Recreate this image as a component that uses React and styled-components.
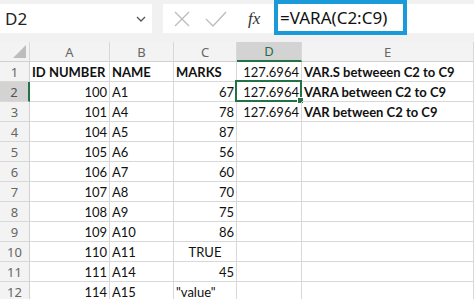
import React from "react";
import styled, { createGlobalStyle } from "styled-components";

const GlobalStyle = createGlobalStyle`
  html, body {
    margin: 0;
    padding: 0;
    background: #ffffff;
  }
  body {
    width: 474px;
    height: 299px;
    overflow: hidden;
    font-family: "Lato", "Noto Sans", sans-serif;
  }
`;

const columns = ["A", "B", "C", "D", "E"];

const rows = [
  { n: 1, a: "ID NUMBER", b: "NAME", c: "MARKS", d: "127.6964", e: "VAR.S betweeen C2 to C9", bold: true },
  { n: 2, a: "100", b: "A1", c: "67", d: "127.6964", e: "VARA between C2 to C9" },
  { n: 3, a: "101", b: "A4", c: "78", d: "127.6964", e: "VAR between C2 to C9" },
  { n: 4, a: "104", b: "A5", c: "87" },
  { n: 5, a: "105", b: "A6", c: "56" },
  { n: 6, a: "106", b: "A7", c: "60" },
  { n: 7, a: "107", b: "A8", c: "70" },
  { n: 8, a: "108", b: "A9", c: "75" },
  { n: 9, a: "109", b: "A10", c: "86" },
  { n: 10, a: "110", b: "A11", c: "TRUE", cAlign: "center" },
  { n: 11, a: "111", b: "A14", c: "45" },
  { n: 12, a: "114", b: "A15", c: "\"value\"", cAlign: "left" },
];

const Page = styled.div`
  position: relative;
  width: 474px;
  height: 299px;
  overflow: hidden;
`;

const TopBar = styled.div`
  display: flex;
  align-items: center;
  height: 42px;
  padding: 4px 0 9px 0;
  box-sizing: border-box;
  background: #f1f1f1;
  gap: 11px;
`;

const NameBox = styled.div`
  width: 152px;
  height: 29px;
  background: #ffffff;
  display: flex;
  align-items: center;
  justify-content: space-between;
  padding: 0 6px 0 5px;
  box-sizing: border-box;
  font-family: "Noto Sans", sans-serif;
  font-size: 17px;
  color: #222;
`;

const FormulaArea = styled.div`
  flex: 1;
  height: 29px;
  background: #ffffff;
  display: flex;
  align-items: center;
  padding-left: 10px;
  gap: 14px;
`;

const FxLabel = styled.span`
  font-family: "Liberation Serif", serif;
  font-style: italic;
  font-size: 17px;
  color: #333;
  margin-left: 7px;
`;

const FormulaBox = styled.div`
  position: absolute;
  left: 274px;
  top: 0px;
  width: 133px;
  height: 35px;
  border: 4px solid #1a9ad8;
  box-sizing: border-box;
  background: #ffffff;
  display: flex;
  align-items: center;
  padding-left: 2px;
  font-family: "Noto Sans", sans-serif;
  font-size: 17px;
  color: #111;
`;

const Grid = styled.div`
  display: grid;
  grid-template-columns: 30px 80px 64px 63px 65px 1fr;
  grid-auto-rows: 20px;
  font-size: 13px;
`;

const Corner = styled.div`
  background: #f3f3f3;
  border-right: 1px solid #d8d8d8;
  border-bottom: 1px solid #d0d0d0;
  position: relative;
  &::after {
    content: "";
    position: absolute;
    right: 3px;
    bottom: 3px;
    border-left: 13px solid transparent;
    border-bottom: 13px solid #bdbdbd;
  }
`;

const ColHead = styled.div`
  background: ${(p) => (p.$active ? "#d3d3d3" : "#f3f3f3")};
  color: ${(p) => (p.$active ? "#1e6f45" : "#666")};
  border-right: 1px solid #d8d8d8;
  border-bottom: ${(p) => (p.$active ? "2px solid #217346" : "1px solid #d0d0d0")};
  box-sizing: border-box;
  display: flex;
  align-items: center;
  justify-content: center;
  font-family: "Noto Sans", sans-serif;
  font-size: 13px;
`;

const RowHead = styled.div`
  background: ${(p) => (p.$active ? "#d3d3d3" : "#f3f3f3")};
  color: ${(p) => (p.$active ? "#555" : "#666")};
  border-right: ${(p) => (p.$active ? "2px solid #217346" : "1px solid #d0d0d0")};
  border-bottom: 1px solid #d8d8d8;
  box-sizing: border-box;
  display: flex;
  align-items: center;
  justify-content: center;
  font-family: "Noto Sans", sans-serif;
  font-size: 13px;
`;

const Cell = styled.div`
  position: relative;
  border-right: 1px solid #d8d8d8;
  border-bottom: 1px solid #d8d8d8;
  box-sizing: border-box;
  display: flex;
  align-items: center;
  justify-content: ${(p) =>
    p.$align === "right" ? "flex-end" : p.$align === "center" ? "center" : "flex-start"};
  padding: 1px 2px 0 2px;
  white-space: nowrap;
  overflow: visible;
  color: #111;
  font-weight: ${(p) => (p.$bold ? 700 : 400)};
`;

const Selection = styled.div`
  position: absolute;
  left: -2px;
  top: -2px;
  right: -1px;
  bottom: -1px;
  border: 2px solid #217346;
  pointer-events: none;
  &::after {
    content: "";
    position: absolute;
    right: -4px;
    bottom: -4px;
    width: 5px;
    height: 5px;
    background: #217346;
    border: 1px solid #fff;
  }
`;

const Chevron = () => (
  <svg width="10" height="6" viewBox="0 0 10 6">
    <path d="M1 1 L5 5 L9 1" fill="none" stroke="#555" strokeWidth="1.3" />
  </svg>
);

const CrossIcon = () => (
  <svg width="18" height="18" viewBox="0 0 18 18">
    <path d="M2 2 L16 16 M16 2 L2 16" stroke="#bdbdbd" strokeWidth="1.4" />
  </svg>
);

const CheckIcon = () => (
  <svg width="22" height="18" viewBox="0 0 22 18">
    <path d="M1 9 L8 16 L21 2" fill="none" stroke="#bdbdbd" strokeWidth="1.4" />
  </svg>
);

export default function App() {
  return (
    <Page>
      <GlobalStyle />
      <TopBar>
        <NameBox>
          <span>D2</span>
          <Chevron />
        </NameBox>
        <FormulaArea>
          <CrossIcon />
          <CheckIcon />
          <FxLabel>fx</FxLabel>
        </FormulaArea>
      </TopBar>
      <FormulaBox>=VARA(C2:C9)</FormulaBox>
      <Grid>
        <Corner />
        {columns.map((c) => (
          <ColHead key={c} $active={c === "D"}>
            {c}
          </ColHead>
        ))}
        {rows.map((r) => (
          <React.Fragment key={r.n}>
            <RowHead $active={r.n === 2}>{r.n}</RowHead>
            <Cell $align={r.bold ? "left" : "right"} $bold={r.bold}>
              {r.a}
            </Cell>
            <Cell $bold={r.bold}>{r.b}</Cell>
            <Cell $align={r.bold ? "left" : r.cAlign || "right"} $bold={r.bold}>
              {r.c}
            </Cell>
            <Cell $align="right">
              {r.d}
              {r.n === 2 && <Selection />}
            </Cell>
            <Cell $bold>{r.e}</Cell>
          </React.Fragment>
        ))}
      </Grid>
    </Page>
  );
}
